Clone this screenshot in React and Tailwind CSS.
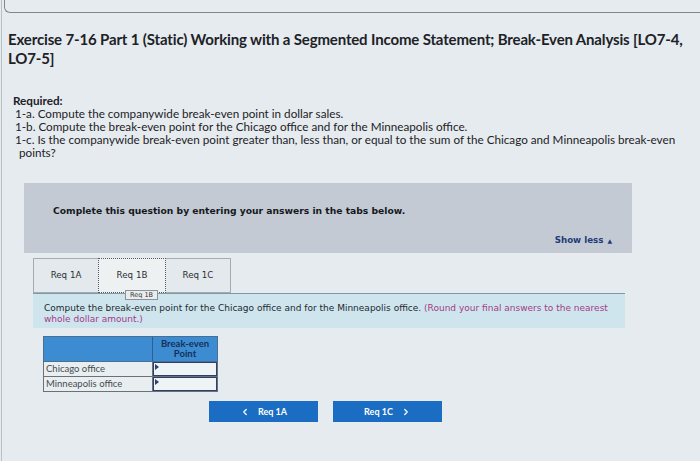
import { ChevronLeft, ChevronRight } from "lucide-react";

const lato = "font-['Lato','Open_Sans',sans-serif]";
const verd = "font-['DejaVu_Sans','Verdana',sans-serif]";

export default function App() {
  return (
    <div className={`relative w-[700px] h-[461px] overflow-hidden bg-[#e5ebef] text-[#1d2226] ${lato}`}>
      {/* faint edge of the page behind */}
      <div className="absolute left-[1px] top-0 h-full border-l border-[#b9c0c6]" />

      {/* previous card edge */}
      <div className="ml-[4px] mr-[-10px] h-[13px] border-l border-b border-[#7f878f] rounded-bl-[6px]" />

      {/* Title */}
      <h1 className="mt-[17px] pl-[8px] text-[15px] font-bold leading-[19px] tracking-[-0.15px]">
        Exercise 7-16 Part 1 (Static) Working with a Segmented Income Statement; Break-Even Analysis [LO7-4,
        <br />
        LO7-5]
      </h1>

      {/* Required */}
      <div className="mt-[26px] pl-[13px] text-[11.7px] leading-[13px]">
        <div className="font-bold">Required:</div>
        <div className="pl-[2px]">1-a. Compute the companywide break-even point in dollar sales.</div>
        <div className="pl-[2px]">1-b. Compute the break-even point for the Chicago office and for the Minneapolis office.</div>
        <div className="pl-[2px]">
          1-c. Is the companywide break-even point greater than, less than, or equal to the sum of the Chicago and Minneapolis break-even
        </div>
        <div className="pl-[6px]">points?</div>
      </div>

      {/* Instructions box */}
      <div className={`mt-[24px] ml-[24px] w-[608px] h-[70px] bg-[#c3cad3] flex flex-col ${verd}`}>
        <div className="pl-[29px] pt-[22px] text-[9.2px] font-bold leading-[12px] text-[#15191d]">
          Complete this question by entering your answers in the tabs below.
        </div>
        <div className="mt-auto mb-[6px] pr-[20px] self-end text-[8.7px] font-bold text-[#1e3c78] flex items-center gap-[4px]">
          Show less <span className="text-[6px]">▲</span>
        </div>
      </div>

      {/* Tabs */}
      <div className={`relative mt-[5px] ml-[33px] flex h-[35px] ${verd} text-[8.7px] text-[#2a2f33]`}>
        <div className="w-[65px] border border-r-0 border-[#a4acb3] bg-[#e3e9ec] flex items-center justify-center">Req 1A</div>
        <div className="w-[68px] border border-dotted border-[#55595d] bg-[#eef1f2] flex items-center justify-center">Req 1B</div>
        <div className="w-[65px] border border-l-0 border-[#a4acb3] bg-[#e3e9ec] flex items-center justify-center">Req 1C</div>
        {/* tooltip */}
        <div className="absolute left-[92px] top-[32px] z-10 px-[4px] h-[10px] bg-[#e9ecee] border border-[#8c9296] text-[6.5px] leading-[8px] text-[#333]">
          Req 1B
        </div>
      </div>

      {/* Question panel */}
      <div className={`ml-[33px] w-[592px] h-[35px] bg-[#cfe5ee] border-t border-[#7f9aa6] pl-[11px] pr-[10px] pt-[9px] ${verd} text-[9px] leading-[11px] text-[#23292e]`}>
        Compute the break-even point for the Chicago office and for the Minneapolis office.{" "}
        <span className="text-[#a53a86]">(Round your final answers to the nearest whole dollar amount.)</span>
      </div>

      {/* Table */}
      <div className={`mt-[8px] ml-[43px] w-[175px] ${lato} text-[9.5px]`}>
        <div className="flex h-[26px] bg-[#3d8bd1] border border-[#4a6f95]">
          <div className="w-[109px] border-r border-[#2f5f8f]" />
          <div className="flex-1 flex items-center justify-center text-center font-bold leading-[10px] text-[#15305a]">
            Break-even
            <br />
            Point
          </div>
        </div>
        {["Chicago office", "Minneapolis office"].map((r) => (
          <div key={r} className="flex h-[15px] bg-[#e9eff1] border border-t-0 border-[#6c7176]">
            <div className="w-[109px] pl-[2px] flex items-center text-[#454b50] border-r border-[#6c7176]">{r}</div>
            <div className="relative flex-1 border-[1.5px] border-[#2d3f6a] bg-[#eef4f5]">
              <div className="absolute left-[1px] top-[1px] w-0 h-0 border-t-[3px] border-b-[3px] border-l-[4px] border-t-transparent border-b-transparent border-l-[#2d3f6a]" />
            </div>
          </div>
        ))}
      </div>

      {/* Nav buttons */}
      <div className="mt-[9px] ml-[209px] flex gap-[15px]">
        <button className="w-[109px] h-[21px] bg-[#1a6dc2] text-white text-[9px] font-bold flex items-center justify-center gap-[8px]">
          <ChevronLeft size={10} strokeWidth={3} />
          Req 1A
        </button>
        <button className="w-[109px] h-[21px] bg-[#1a6dc2] text-white text-[9px] font-bold flex items-center justify-center gap-[8px]">
          Req 1C
          <ChevronRight size={10} strokeWidth={3} />
        </button>
      </div>
    </div>
  );
}
